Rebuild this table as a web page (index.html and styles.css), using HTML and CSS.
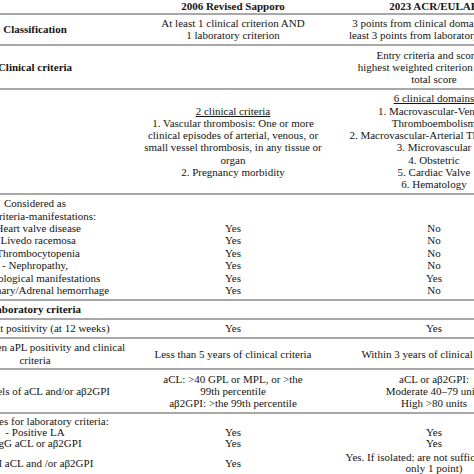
FILE: index.html
```html
<!DOCTYPE html>
<html lang="en">
<head>
<meta charset="utf-8">
<title>APS classification criteria</title>
<link rel="stylesheet" href="styles.css">
</head>
<body>
<div class="frame">
<table class="crit">
<colgroup><col class="c1"><col class="c2"><col class="c3"></colgroup>
<thead>
<tr class="head"><th></th><th>2006 Revised Sapporo</th><th>2023 ACR/EULAR</th></tr>
</thead>
<tbody>
<tr class="top end"><td class="b">Classification</td><td>At least 1 clinical criterion AND<br>1 laboratory criterion</td><td>3 points from clinical domains and at<br>least 3 points from laboratory domains</td></tr>
<tr class="top end"><td class="b">Clinical criteria</td><td></td><td>Entry criteria and scoring:<br>highest weighted criterion towards<br>total score</td></tr>
<tr class="top end"><td></td><td><u>2 clinical criteria</u><br>1. Vascular thrombosis: One or more<br>clinical episodes of arterial, venous, or<br>small vessel thrombosis, in any tissue or<br>organ<br>2. Pregnancy morbidity</td><td><u>6 clinical domains</u><br>1. Macrovascular-Venous<br>Thromboembolism<br>2. Macrovascular-Arterial Thrombosis<br>3. Microvascular<br>4. Obstetric<br>5. Cardiac Valve<br>6. Hematology</td></tr>
<tr class="top"><td>Considered as<br>non-criteria-manifestations:</td><td></td><td></td></tr>
<tr class="item"><td>- Heart valve disease</td><td>Yes</td><td>No</td></tr>
<tr class="item"><td>- Livedo racemosa</td><td>Yes</td><td>No</td></tr>
<tr class="item"><td>- Thrombocytopenia</td><td>Yes</td><td>No</td></tr>
<tr class="item"><td>- Nephropathy,</td><td>Yes</td><td>No</td></tr>
<tr class="item"><td>- Neurological manifestations</td><td>Yes</td><td>Yes</td></tr>
<tr class="item end"><td>- Pulmonary/Adrenal hemorrhage</td><td>Yes</td><td>No</td></tr>
<tr class="top end"><td class="b">Laboratory criteria</td><td></td><td></td></tr>
<tr class="top end"><td>Persistent positivity (at 12 weeks)</td><td>Yes</td><td>Yes</td></tr>
<tr class="top end"><td>Time between aPL positivity and clinical<br>criteria</td><td>Less than 5 years of clinical criteria</td><td>Within 3 years of clinical criteria</td></tr>
<tr class="top end"><td>Titer levels of aCL and/or aβ2GPI</td><td>aCL: &gt;40 GPL or MPL, or &gt;the<br>99th percentile<br>aβ2GPI: &gt;the 99th percentile</td><td>aCL or aβ2GPI:<br>Moderate 40–79 units<br>High &gt;80 units</td></tr>
<tr class="top tight"><td>Categories for laboratory criteria:</td><td></td><td></td></tr>
<tr class="tight"><td>- Positive LA</td><td>Yes</td><td>Yes</td></tr>
<tr class="tight"><td>- IgG aCL or aβ2GPI</td><td>Yes</td><td>Yes</td></tr>
<tr class="tight last"><td>- IgM aCL and /or aβ2GPI</td><td>Yes</td><td>Yes. If isolated: are not sufficient (count<br>only 1 point)</td></tr>
</tbody>
</table>
</div>
</body>
</html>
```

FILE: styles.css
```css
html, body {
  margin: 0;
  padding: 0;
  background: #ffffff;
}

.frame {
  width: 474px;
  height: 474px;
  overflow: hidden;
}

.crit {
  border-collapse: collapse;
  table-layout: fixed;
  width: 594px;
  margin-left: -61px;
  font-family: "Liberation Serif", "Times New Roman", serif;
  font-size: 11px;
  line-height: 12.3px;
  color: #141414;
}

.c1 { width: 192px; }
.c2 { width: 204px; }
.c3 { width: 198px; }

.crit th,
.crit td {
  padding: 0 4px;
  text-align: center;
  vertical-align: middle;
  font-weight: normal;
}

.crit th {
  font-weight: bold;
  padding-bottom: 0.5px;
}

.crit .b {
  font-weight: bold;
}

.crit tr.top > td {
  border-top: 2px solid #a8a8a8;
  padding-top: 2.4px;
}

.crit tr.end > td {
  padding-bottom: 2.4px;
}

.crit tr.item > td {
  line-height: 12.4px;
}

.crit tr.tight > td {
  line-height: 11px;
}

.crit tr.last > td {
  padding-top: 3px;
}

.crit u {
  text-decoration: underline;
  text-underline-offset: 1px;
}
```
